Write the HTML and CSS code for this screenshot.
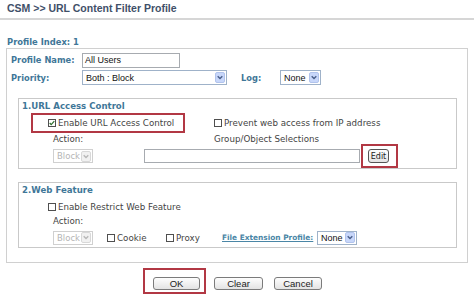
FILE: index.html
```html
<!DOCTYPE html>
<html>
<head>
<meta charset="utf-8">
<link rel="stylesheet" href="styles.css">
</head>
<body>
<div class="title">CSM &gt;&gt; URL Content Filter Profile</div>
<div class="pindex">Profile Index: 1</div>
<div class="outer">
  <div class="row r1">
    <span class="lbl">Profile Name:</span>
    <div class="textbox name">All Users</div>
  </div>
  <div class="row r2">
    <span class="lbl">Priority:</span>
    <div class="sel prio"><span class="stext">Both : Block</span><svg class="arr" width="10" height="11" viewBox="0 0 10 11"><rect x="0.5" y="0.5" width="9" height="10" rx="1.5" fill="#c8d7fa" stroke="#b1c3ec"/><path d="M2.7 4.2 L5 6.5 L7.3 4.2" fill="none" stroke="#4a5f8a" stroke-width="1.4"/></svg></div>
    <span class="lbl log">Log:</span>
    <div class="sel logsel"><span class="stext">None</span><svg class="arr" width="10" height="11" viewBox="0 0 10 11"><rect x="0.5" y="0.5" width="9" height="10" rx="1.5" fill="#c8d7fa" stroke="#b1c3ec"/><path d="M2.7 4.2 L5 6.5 L7.3 4.2" fill="none" stroke="#4a5f8a" stroke-width="1.4"/></svg></div>
  </div>

  <div class="section s1">
    <div class="sh">1.URL Access Control</div>
    <div class="srow ra">
      <div class="hl en">
        <svg class="cb" width="8" height="8" viewBox="0 0 8 8"><rect x="0.5" y="0.5" width="7" height="7" fill="#fff" stroke="#4f4f4f"/><path d="M1.7 4 L3.2 5.6 L6.3 2.2" fill="none" stroke="#2c6e2c" stroke-width="1.2"/></svg>
        <span>Enable URL Access Control</span>
      </div>
      <div class="cbl prev">
        <svg class="cb" width="8" height="8" viewBox="0 0 8 8"><rect x="0.5" y="0.5" width="7" height="7" fill="#fff" stroke="#4f4f4f"/></svg>
        <span>Prevent web access from IP address</span>
      </div>
    </div>
    <div class="srow rb"><span class="act">Action:</span><span>Group/Object Selections</span></div>
    <div class="srow rc">
      <div class="sel dis blk"><span class="stext">Block</span><svg class="arr" width="10" height="11" viewBox="0 0 10 11"><rect x="0.5" y="0.5" width="9" height="10" rx="1.5" fill="#f1f1f1" stroke="#d8d8d8"/><path d="M2.7 4.2 L5 6.5 L7.3 4.2" fill="none" stroke="#b8b8b8" stroke-width="1.4"/></svg></div>
      <div class="textbox grp"></div>
      <div class="hl editbox"><span class="btn edit">Edit</span></div>
    </div>
  </div>

  <div class="section s2">
    <div class="sh">2.Web Feature</div>
    <div class="srow r2a">
      <svg class="cb" width="8" height="8" viewBox="0 0 8 8"><rect x="0.5" y="0.5" width="7" height="7" fill="#fff" stroke="#4f4f4f"/></svg>
      <span>Enable Restrict Web Feature</span>
    </div>
    <div class="srow r2b"><span class="act">Action:</span></div>
    <div class="srow r2c">
      <div class="sel dis blk"><span class="stext">Block</span><svg class="arr" width="10" height="11" viewBox="0 0 10 11"><rect x="0.5" y="0.5" width="9" height="10" rx="1.5" fill="#f1f1f1" stroke="#d8d8d8"/><path d="M2.7 4.2 L5 6.5 L7.3 4.2" fill="none" stroke="#b8b8b8" stroke-width="1.4"/></svg></div>
      <div class="cbl cookie">
        <svg class="cb" width="8" height="8" viewBox="0 0 8 8"><rect x="0.5" y="0.5" width="7" height="7" fill="#fff" stroke="#4f4f4f"/></svg>
        <span>Cookie</span>
      </div>
      <div class="cbl proxy">
        <svg class="cb" width="8" height="8" viewBox="0 0 8 8"><rect x="0.5" y="0.5" width="7" height="7" fill="#fff" stroke="#4f4f4f"/></svg>
        <span>Proxy</span>
      </div>
      <a class="link" href="#">File Extension Profile:</a>
      <div class="sel fesel"><span class="stext">None</span><svg class="arr" width="10" height="11" viewBox="0 0 10 11"><rect x="0.5" y="0.5" width="9" height="10" rx="1.5" fill="#c8d7fa" stroke="#b1c3ec"/><path d="M2.7 4.2 L5 6.5 L7.3 4.2" fill="none" stroke="#4a5f8a" stroke-width="1.4"/></svg></div>
    </div>
  </div>
</div>

<div class="buttons">
  <div class="hl okbox"><span class="btn big ok">OK</span></div>
  <span class="btn big clear">Clear</span>
  <span class="btn big cancel">Cancel</span>
</div>
</body>
</html>
```

FILE: styles.css
```css
html, body {
  margin: 0;
  padding: 0;
}
body {
  width: 474px;
  height: 298px;
  overflow: hidden;
  background: #fff;
  font-family: "DejaVu Sans", Verdana, sans-serif;
  font-size: 8.7px;
  color: #444;
}

.title {
  box-sizing: border-box;
  height: 20px;
  padding: 1px 0 0 7px;
  border-bottom: 2px solid #d6d6d6;
  font-family: "Liberation Sans", Arial, sans-serif;
  font-weight: bold;
  font-size: 10.5px;
  line-height: 14px;
  color: #3f5069;
}

.pindex {
  margin-top: 16px;
  height: 12px;
  padding-left: 7px;
  font-weight: bold;
  font-size: 8.4px;
  line-height: 12px;
  color: #3f7798;
}

.outer {
  margin: 0 6px;
  border: 1px solid #d0d0d0;
  height: 215px;
  box-sizing: border-box;
}

.row {
  display: flex;
  align-items: center;
  padding-left: 4px;
}
.r1 { margin-top: 4px; height: 14px; }
.r2 { margin-top: 3px; height: 15px; }

.lbl {
  width: 71px;
  font-weight: bold;
  font-size: 8.3px;
  color: #3f7798;
}
.lbl.log {
  margin-left: 14px;
  width: 39px;
}

.textbox {
  box-sizing: border-box;
  height: 14px;
  border: 1px solid #a7abb0;
  background: #fff;
  font-family: "Liberation Sans", Arial, sans-serif;
  font-size: 9px;
  line-height: 12px;
  padding-left: 2px;
  color: #111;
}
.name { width: 98px; height: 15px; }

.sel {
  box-sizing: border-box;
  display: flex;
  align-items: center;
  justify-content: space-between;
  height: 15px;
  border: 1px solid #9fb2c9;
  background: #fff;
  padding: 0 1px 0 3px;
  font-family: "Liberation Sans", Arial, sans-serif;
  font-size: 9px;
  color: #111;
}
.sel .arr { display: block; flex: none; }
.prio { width: 145px; }
.logsel { width: 41px; }
.fesel { width: 40px; height: 14px; }
.sel.dis {
  border-color: #d0d0d0;
  color: #b5b5b5;
  font-family: "DejaVu Sans", Verdana, sans-serif;
  font-size: 8.5px;
  height: 14px;
}
.blk { width: 40px; margin-left: 34px; }

.section {
  border: 1px solid #c9c9c9;
  margin: 13px 10px 0 11px;
}
.s2 { margin-bottom: 14px; }

.sh {
  padding: 1px 0 0 3px;
  height: 12px;
  line-height: 12px;
  font-weight: bold;
  font-size: 8.6px;
  color: #3f7798;
}

.srow {
  display: flex;
  align-items: center;
}

.cb {
  display: block;
  flex: none;
  margin-right: 2px;
}

.hl {
  box-sizing: border-box;
  border: 2px solid #b23844;
  display: flex;
  align-items: center;
}

.ra {
  height: 22px;
  align-items: flex-start;
}
.en {
  margin-top: 1px;
  margin-left: 12px;
  width: 154px;
  height: 20px;
  padding-left: 15px;
}
.cbl {
  display: flex;
  align-items: center;
}
.prev {
  margin-top: 1px;
  height: 20px;
  margin-left: 29px;
}

.rb {
  height: 10px;
  line-height: 10px;
}
.act {
  display: inline-block;
  width: 161px;
  margin-left: 34px;
}

.rc { height: 24px; }
.grp { width: 216px; margin-left: 51px; }
.editbox {
  margin-left: 1px;
  width: 37px;
  height: 24px;
  padding-left: 5px;
}

.btn {
  box-sizing: border-box;
  display: flex;
  align-items: center;
  justify-content: center;
  border: 1px solid #7b7b7b;
  border-radius: 3px;
  background: linear-gradient(#fefefe, #e3e3e3);
  color: #222;
}
.edit {
  width: 21px;
  height: 14px;
  font-size: 8px;
  border-color: #555;
}

.r2a {
  margin-top: 4px;
  height: 14px;
  padding-left: 29px;
}
.r2b {
  height: 14px;
  line-height: 14px;
}
.r2c { height: 19px; }
.cookie { margin-left: 14px; width: 59px; }
.proxy { width: 56px; }
.link {
  display: inline-block;
  width: 95px;
  white-space: nowrap;
  font-weight: bold;
  font-size: 7.4px;
  color: #4a86a6;
  text-decoration: underline;
  line-height: 14px;
  padding-top: 1px;
}

.buttons {
  display: flex;
  align-items: flex-end;
  margin-top: 5px;
  padding-left: 143px;
  height: 26px;
}
.okbox {
  width: 63px;
  height: 26px;
  padding: 0 4px 2px 8px;
  align-items: flex-end;
}
.big {
  height: 13px;
  font-family: "Liberation Sans", Arial, sans-serif;
  font-size: 9.5px;
}
.ok { width: 49px; }
.clear { width: 49px; margin-left: 8px; margin-bottom: 4px; }
.cancel { width: 48px; margin-left: 11px; margin-bottom: 4px; }
```
